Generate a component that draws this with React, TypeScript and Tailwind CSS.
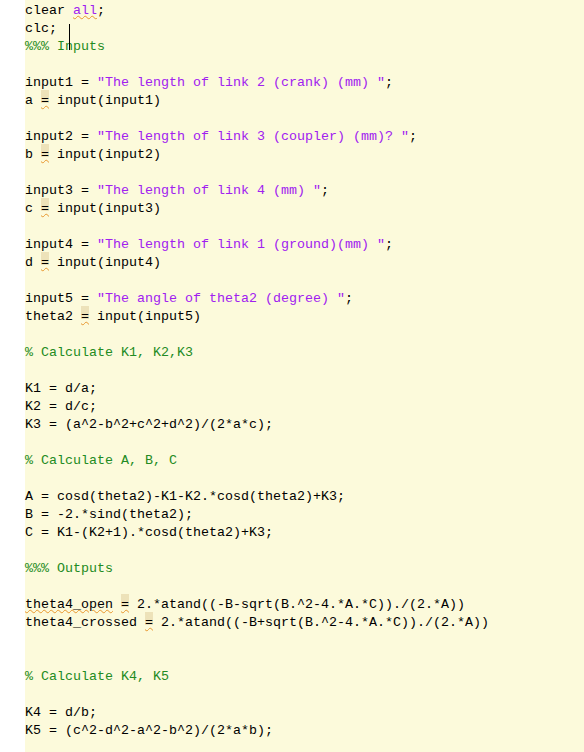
import React from "react";

type Seg = [string, string];

const N = "n";
const S = "s";
const C = "c";
const EQ = "eq";
const SQ = "sq";
const SQS = "sqs";

const lines: Seg[][] = [
  [[N, "clear "], [SQS, "all"], [N, ";"]],
  [[N, "clc;"]],
  [[C, "%%% Inputs"]],
  [],
  [[N, "input1 = "], [S, '"The length of link 2 (crank) (mm) "'], [N, ";"]],
  [[N, "a "], [EQ, "="], [N, " input(input1)"]],
  [],
  [[N, "input2 = "], [S, '"The length of link 3 (coupler) (mm)? "'], [N, ";"]],
  [[N, "b "], [EQ, "="], [N, " input(input2)"]],
  [],
  [[N, "input3 = "], [S, '"The length of link 4 (mm) "'], [N, ";"]],
  [[N, "c "], [EQ, "="], [N, " input(input3)"]],
  [],
  [[N, "input4 = "], [S, '"The length of link 1 (ground)(mm) "'], [N, ";"]],
  [[N, "d "], [EQ, "="], [N, " input(input4)"]],
  [],
  [[N, "input5 = "], [S, '"The angle of theta2 (degree) "'], [N, ";"]],
  [[N, "theta2 "], [EQ, "="], [N, " input(input5)"]],
  [],
  [[C, "% Calculate K1, K2,K3"]],
  [],
  [[N, "K1 = d/a;"]],
  [[N, "K2 = d/c;"]],
  [[N, "K3 = (a^2-b^2+c^2+d^2)/(2*a*c);"]],
  [],
  [[C, "% Calculate A, B, C"]],
  [],
  [[N, "A = cosd(theta2)-K1-K2.*cosd(theta2)+K3;"]],
  [[N, "B = -2.*sind(theta2);"]],
  [[N, "C = K1-(K2+1).*cosd(theta2)+K3;"]],
  [],
  [[C, "%%% Outputs"]],
  [],
  [[SQ, "theta4_open"], [N, " "], [EQ, "="], [N, " 2.*atand((-B-sqrt(B.^2-4.*A.*C))./(2.*A))"]],
  [[N, "theta4_crossed "], [EQ, "="], [N, " 2.*atand((-B+sqrt(B.^2-4.*A.*C))./(2.*A))"]],
  [],
  [],
  [[C, "% Calculate K4, K5"]],
  [],
  [[N, "K4 = d/b;"]],
  [[N, "K5 = (c^2-d^2-a^2-b^2)/(2*a*b);"]],
];

function Segment({ seg }: { seg: Seg }) {
  const [t, text] = seg;
  if (t === S) return <span className="text-[#a020f0]">{text}</span>;
  if (t === C) return <span className="text-[#228b22]">{text}</span>;
  if (t === SQS)
    return (
      <span className="text-[#a020f0] underline decoration-wavy decoration-[#e8962e] decoration-1 underline-offset-[1px]">
        {text}
      </span>
    );
  if (t === SQ)
    return (
      <span className="underline decoration-wavy decoration-[#e8962e] decoration-1 underline-offset-[1px]">
        {text}
      </span>
    );
  if (t === EQ)
    return (
      <span className="relative inline-block">
        <span className="absolute left-0 right-0 top-[-2px] h-[13px] bg-[#ede2b9]" />
        <span className="relative underline decoration-wavy decoration-[#e8962e] decoration-1 underline-offset-[1px]">
          {text}
        </span>
      </span>
    );
  return <span>{text}</span>;
}

export default function App() {
  return (
    <div className="relative flex h-[752px] w-[584px] overflow-hidden bg-white">
      <div className="w-[25px] shrink-0 bg-white" />
      <div
        className="flex-1 bg-[#fcfadb] pt-[2px] text-black text-[13.33px] leading-[18px] whitespace-pre"
        style={{ fontFamily: '"Liberation Mono", "Courier New", monospace' }}
      >
        {lines.map((segs, i) => (
          <div key={i} className="h-[18px]">
            {segs.length === 0 ? " " : segs.map((s, j) => <Segment key={j} seg={s} />)}
          </div>
        ))}
      </div>
      <div className="absolute left-[69px] top-[24px] h-[26px] w-[1px] bg-black" />
    </div>
  );
}
